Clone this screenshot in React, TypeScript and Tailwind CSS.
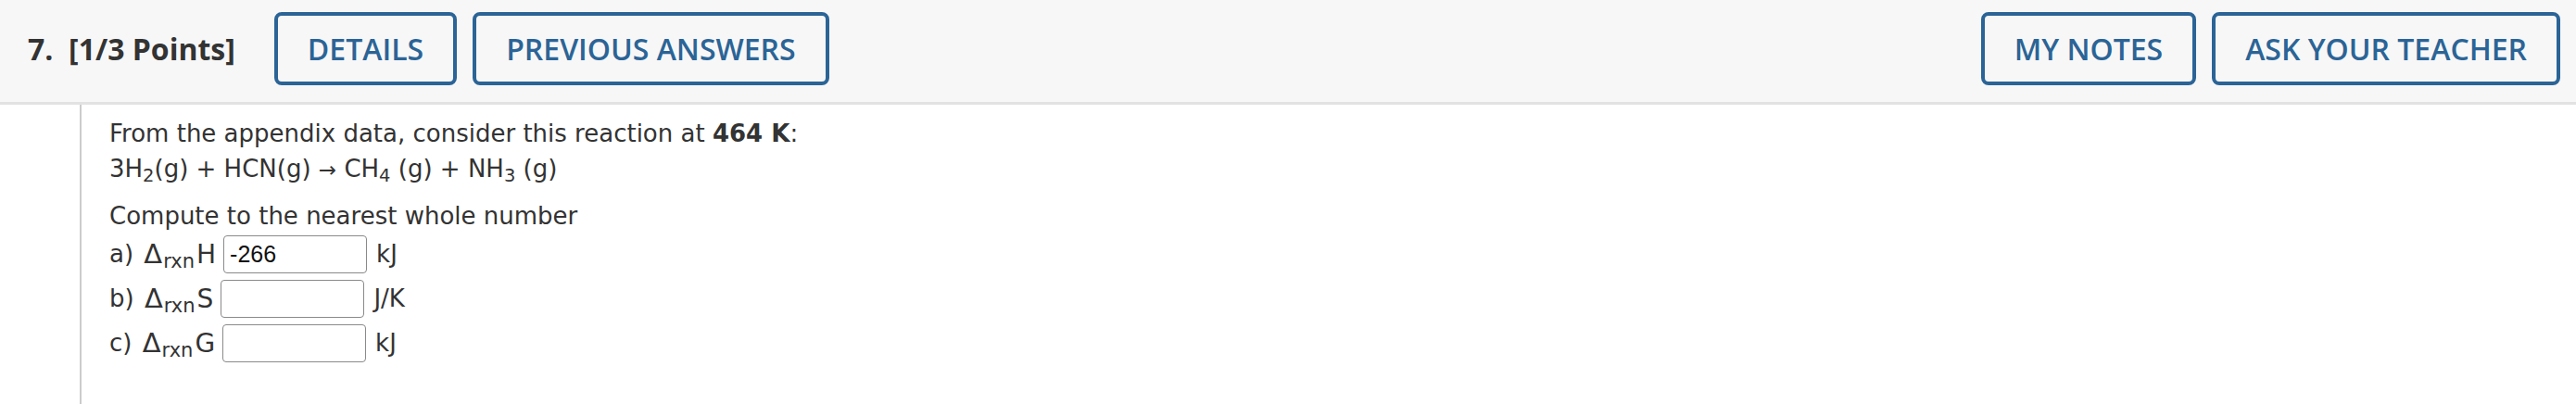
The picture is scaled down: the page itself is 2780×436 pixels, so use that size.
const body = "font-['DejaVu_Sans',Verdana,sans-serif]";

function HeaderButton({ label }: { label: string }) {
  return (
    <button className="h-[79px] px-[32px] border-[4px] border-[#2b6496] rounded-[8px] bg-[#f7f7f7] text-[#2b6496] text-[32px] font-semibold uppercase font-['Open_Sans',sans-serif] leading-none">
      {label}
    </button>
  );
}

function Delta({ q }: { q: string }) {
  return (
    <span className="ml-[3px] text-[28px]">
      <span className="text-[29px]">Δ</span>
      <sub className="ml-[1px] mr-[2px] text-[21px]">rxn</sub>
      {q}
    </span>
  );
}

function AnswerRow({ letter, q, value, unit }: { letter: string; q: string; value?: string; unit: string }) {
  return (
    <div className="flex items-center h-[42px]">
      <span className="whitespace-pre">
        {letter}){" "}
      </span>
      <Delta q={q} />
      <input
        readOnly
        value={value ?? ""}
        className="ml-[8px] w-[155px] h-[41px] border border-[#8a8a8a] rounded-[4px] bg-white px-[6px] text-[25px] text-[#111] font-['Liberation_Sans',Arial,sans-serif] outline-none"
      />
      <span className="ml-[10px]">{unit}</span>
    </div>
  );
}

export default function App() {
  return (
    <div className="w-[2780px] h-[436px] bg-white flex flex-col overflow-hidden">
      <header className="h-[113px] shrink-0 bg-[#f7f7f7] border-b-[3px] border-[#e2e2e2] flex items-start justify-between pt-[13px] pl-[30px] pr-[17px]">
        <div className="flex items-center gap-[17px]">
          <h2 className="mr-[25px] text-[32px] font-bold text-[#333] font-['Open_Sans',sans-serif] whitespace-pre">
            7.  [1/3 Points]
          </h2>
          <HeaderButton label="Details" />
          <HeaderButton label="Previous Answers" />
        </div>
        <div className="flex items-center gap-[17px]">
          <HeaderButton label="My Notes" />
          <HeaderButton label="Ask Your Teacher" />
        </div>
      </header>

      <div className="flex-1 flex">
        <div className="w-[86px] shrink-0" />
        <div className={`border-l-2 border-[#cccccc] pl-[30px] pt-[13px] text-[26px] leading-[36px] text-[#333] ${body}`}>
          <p>
            From the appendix data, consider this reaction at <strong>464 K</strong>:
          </p>
          <p className="leading-[40px]">
            3H<sub>2</sub>(g) + HCN(g) <span className="text-[23px]">→</span> CH<sub>4</sub> (g) + NH<sub>3</sub> (g)
          </p>
          <p className="mt-[12px]">Compute to the nearest whole number</p>
          <div className="flex flex-col gap-[6px] mt-[2px]">
            <AnswerRow letter="a" q="H" value="-266" unit="kJ" />
            <AnswerRow letter="b" q="S" unit="J/K" />
            <AnswerRow letter="c" q="G" unit="kJ" />
          </div>
        </div>
      </div>
    </div>
  );
}
